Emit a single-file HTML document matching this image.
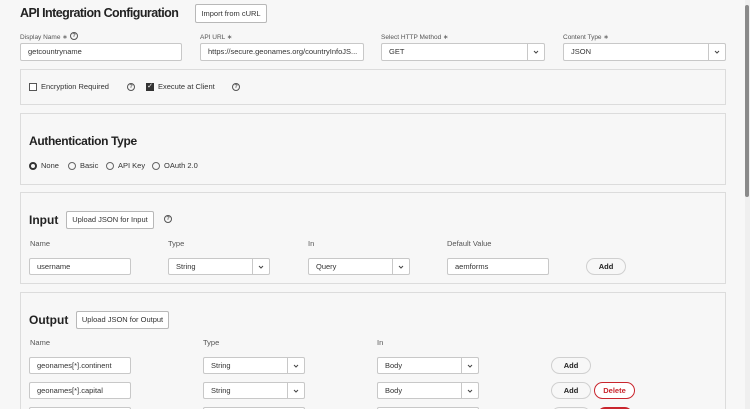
<!DOCTYPE html>
<html><head><style>
*{box-sizing:border-box;margin:0;padding:0}
html,body{width:750px;height:409px;overflow:hidden}
body{background:#f7f7f7;font-family:"Liberation Sans",sans-serif;color:#2c2c2c;position:relative}
.a{position:absolute}
.lbl{position:absolute;font-size:6.5px;color:#555}
.in{position:absolute;height:18px;background:#fff;border:1px solid #c8c8c8;border-radius:2px;font-size:7.5px;line-height:16px;padding-left:7px;color:#333;white-space:nowrap;overflow:hidden}
.sel .dv{position:absolute;right:16px;top:0;bottom:0;border-left:1px solid #c8c8c8}
.sel .ch{position:absolute;right:5px;top:5px;width:6px;height:6px}
.box{position:absolute;left:20px;width:706px;border:1px solid #dcdcdc;background:#f7f7f7}
.btn{position:absolute;height:18px;border:1px solid #b8b8b8;background:#fff;border-radius:2px;font-size:7.5px;line-height:16px;text-align:center;color:#333}
.h{position:absolute;font-weight:bold;color:#222;white-space:nowrap}
.pill{position:absolute;height:17px;border:1px solid #d0d0d0;border-radius:9px;background:#f7f7f7;font-size:7.5px;font-weight:bold;line-height:15px;text-align:center;color:#222}
.del{border-color:#c9252d;color:#c9252d;background:#fff}
.q{position:absolute;width:8px;height:8px;border:1px solid #555;border-radius:50%;font-size:5.5px;line-height:6px;text-align:center;color:#555;font-weight:bold}
.t{position:absolute;font-size:7.5px;color:#333;white-space:nowrap}
.rad{position:absolute;width:8px;height:8px;border:1px solid #666;border-radius:50%}
</style></head><body>
<div class="h" style="left:20px;top:6px;font-size:12.5px;letter-spacing:-0.55px">API Integration Configuration</div>
<div class="btn" style="left:195px;top:4px;width:72px;height:19px;line-height:17px">Import from cURL</div>

<div class="lbl" style="left:20px;top:33px">Display Name ∗</div><div class="q" style="left:70px;top:32px">?</div>
<div class="lbl" style="left:200px;top:33px">API URL ∗</div>
<div class="lbl" style="left:381px;top:33px">Select HTTP Method ∗</div>
<div class="lbl" style="left:563px;top:33px">Content Type ∗</div>
<div class="in" style="left:20px;top:43px;width:162px">getcountryname</div>
<div class="in" style="left:200px;top:43px;width:164px">https://secure.geonames.org/countryInfoJS...</div>
<div class="in sel" style="left:381px;top:43px;width:164px">GET<div class="dv"></div><svg class="ch" viewBox="0 0 6 6"><path d="M1 2l2 2 2-2" fill="none" stroke="#444" stroke-width="1"/></svg></div>
<div class="in sel" style="left:563px;top:43px;width:163px">JSON<div class="dv"></div><svg class="ch" viewBox="0 0 6 6"><path d="M1 2l2 2 2-2" fill="none" stroke="#444" stroke-width="1"/></svg></div>

<div class="box" style="top:69px;height:36px"></div>
<div class="a" style="left:29px;top:83px;width:8px;height:8px;border:1px solid #555;background:#fff"></div>
<div class="t" style="left:41px;top:82px">Encryption Required</div>
<div class="q" style="left:127px;top:83px">?</div>
<div class="a" style="left:146px;top:83px;width:8px;height:8px;background:#333;color:#fff;font-size:7px;line-height:8px;text-align:center">✓</div>
<div class="t" style="left:158px;top:82px">Execute at Client</div>
<div class="q" style="left:232px;top:83px">?</div>

<div class="box" style="top:113px;height:72px"></div>
<div class="h" style="left:29px;top:134px;font-size:12px;letter-spacing:-0.35px">Authentication Type</div>
<div class="rad" style="left:29px;top:162px;border:2.5px solid #333"></div><div class="t" style="left:41px;top:161px">None</div>
<div class="rad" style="left:68px;top:162px"></div><div class="t" style="left:80px;top:161px">Basic</div>
<div class="rad" style="left:106px;top:162px"></div><div class="t" style="left:118px;top:161px">API Key</div>
<div class="rad" style="left:152px;top:162px"></div><div class="t" style="left:164px;top:161px">OAuth 2.0</div>

<div class="box" style="top:192px;height:92px"></div>
<div class="h" style="left:29px;top:213px;font-size:12px">Input</div>
<div class="btn" style="left:66px;top:211px;width:88px">Upload JSON for Input</div>
<div class="q" style="left:164px;top:215px">?</div>
<div class="t" style="left:30px;top:239px;color:#555">Name</div>
<div class="t" style="left:168px;top:239px;color:#555">Type</div>
<div class="t" style="left:308px;top:239px;color:#555">In</div>
<div class="t" style="left:447px;top:239px;color:#555">Default Value</div>
<div class="in" style="left:29px;top:258px;width:102px;height:17px;line-height:15px">username</div>
<div class="in sel" style="left:168px;top:258px;width:102px;height:17px;line-height:15px">String<div class="dv"></div><svg class="ch" viewBox="0 0 6 6"><path d="M1 2l2 2 2-2" fill="none" stroke="#444"/></svg></div>
<div class="in sel" style="left:308px;top:258px;width:102px;height:17px;line-height:15px">Query<div class="dv"></div><svg class="ch" viewBox="0 0 6 6"><path d="M1 2l2 2 2-2" fill="none" stroke="#444"/></svg></div>
<div class="in" style="left:447px;top:258px;width:102px;height:17px;line-height:15px">aemforms</div>
<div class="pill" style="left:586px;top:258px;width:40px">Add</div>

<div class="box" style="top:292px;height:130px"></div>
<div class="h" style="left:29px;top:313px;font-size:12px">Output</div>
<div class="btn" style="left:76px;top:311px;width:93px">Upload JSON for Output</div>
<div class="t" style="left:30px;top:338px;color:#555">Name</div>
<div class="t" style="left:203px;top:338px;color:#555">Type</div>
<div class="t" style="left:377px;top:338px;color:#555">In</div>

<div class="in" style="left:29px;top:357px;width:102px;height:17px;line-height:15px">geonames[*].continent</div>
<div class="in sel" style="left:203px;top:357px;width:102px;height:17px;line-height:15px">String<div class="dv"></div><svg class="ch" viewBox="0 0 6 6"><path d="M1 2l2 2 2-2" fill="none" stroke="#444"/></svg></div>
<div class="in sel" style="left:377px;top:357px;width:102px;height:17px;line-height:15px">Body<div class="dv"></div><svg class="ch" viewBox="0 0 6 6"><path d="M1 2l2 2 2-2" fill="none" stroke="#444"/></svg></div>
<div class="pill" style="left:551px;top:357px;width:40px">Add</div>

<div class="in" style="left:29px;top:382px;width:102px;height:17px;line-height:15px">geonames[*].capital</div>
<div class="in sel" style="left:203px;top:382px;width:102px;height:17px;line-height:15px">String<div class="dv"></div><svg class="ch" viewBox="0 0 6 6"><path d="M1 2l2 2 2-2" fill="none" stroke="#444"/></svg></div>
<div class="in sel" style="left:377px;top:382px;width:102px;height:17px;line-height:15px">Body<div class="dv"></div><svg class="ch" viewBox="0 0 6 6"><path d="M1 2l2 2 2-2" fill="none" stroke="#444"/></svg></div>
<div class="pill" style="left:551px;top:382px;width:40px">Add</div>
<div class="pill del" style="left:594px;top:382px;width:41px">Delete</div>

<div class="in" style="left:29px;top:407px;width:102px"></div>
<div class="in" style="left:203px;top:407px;width:102px"></div>
<div class="in" style="left:377px;top:407px;width:102px"></div>
<div class="pill" style="left:551px;top:407px;width:40px"></div>
<div class="pill" style="left:597px;top:407px;width:36px;background:#c9252d;border-color:#c9252d"></div>

<div class="a" style="left:745px;top:0;width:5px;height:409px;background:#efefef"></div>
<div class="a" style="left:745px;top:5px;width:4px;height:192px;background:#8a8a8a;border-radius:2px"></div>
</body></html>
